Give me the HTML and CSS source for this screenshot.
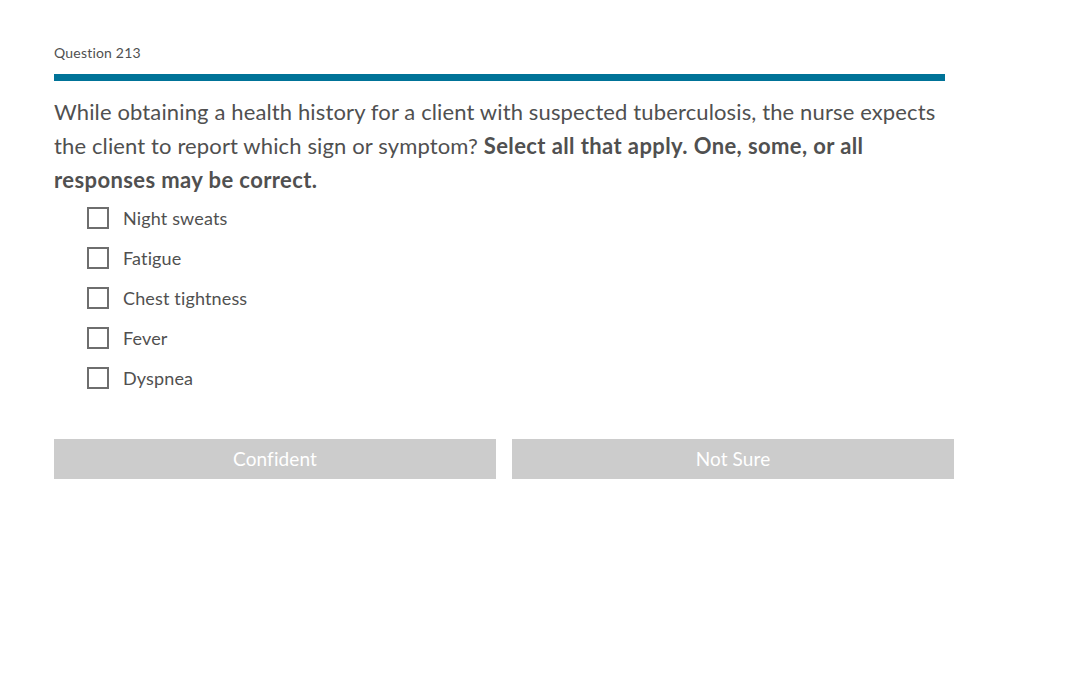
FILE: index.html
```html
<!DOCTYPE html>
<html>
  <head>
    <title>Question 213</title>
    <link rel="stylesheet" href="styles.css">
  </head>
  <body>
    <div id="content">
      <div class="question-number">Question 213</div>
      <div class="question-bar"></div>

      <p class="stem">
        While obtaining a health history for a client with suspected tuberculosis, the nurse expects
        the client to report which sign or symptom? <b>Select all that apply. One, some, or all</b>
        <b>responses may be correct.</b>
      </p>

      <ul class="choices">
        <li><label><span class="box"></span>Night sweats</label></li>
        <li><label><span class="box"></span>Fatigue</label></li>
        <li><label><span class="box"></span>Chest tightness</label></li>
        <li><label><span class="box"></span>Fever</label></li>
        <li><label><span class="box"></span>Dyspnea</label></li>
      </ul>

      <div class="confidence">
        <button type="button" disabled>Confident</button>
        <button type="button" disabled>Not Sure</button>
      </div>
    </div>
  </body>
</html>
```

FILE: styles.css
```css
body {
  margin: 0;
  background-color: #ffffff;
  color: #505050;
  font-family: 'Lato', 'Open Sans', sans-serif;
}

#content {
  width: 900px;
  padding: 44px 0 0 54px;
}

.question-number {
  font-size: 14px;
  line-height: 18px;
  letter-spacing: 0.2px;
  color: #505050;
}

.question-bar {
  width: 891px;
  height: 7px;
  margin-top: 12px;
  background-color: #007398;
}

.stem {
  margin: 14px 0 0 0;
  font-size: 22px;
  line-height: 34px;
  letter-spacing: 0.13px;
  width: 890px;
}

.stem b {
  font-weight: 700;
  letter-spacing: 0.4px;
}

.choices {
  list-style: none;
  margin: 1px 0 0 0;
  padding: 0 0 0 33px;
}

.choices li {
  height: 40px;
}

.choices label {
  display: flex;
  align-items: center;
  gap: 14px;
  font-size: 18px;
  line-height: 40px;
  letter-spacing: 0.15px;
}

.box {
  width: 18px;
  height: 18px;
  border: 2px solid #6e6e6e;
  display: block;
}

.confidence {
  display: flex;
  gap: 16px;
  margin-top: 41px;
}

.confidence button {
  flex: 1;
  height: 40px;
  border: none;
  border-radius: 0;
  background-color: #cccccc;
  color: #ffffff;
  font-family: 'Lato', 'Open Sans', sans-serif;
  font-size: 19px;
  letter-spacing: 0.1px;
  padding: 0 0 2px 0;
}
```
